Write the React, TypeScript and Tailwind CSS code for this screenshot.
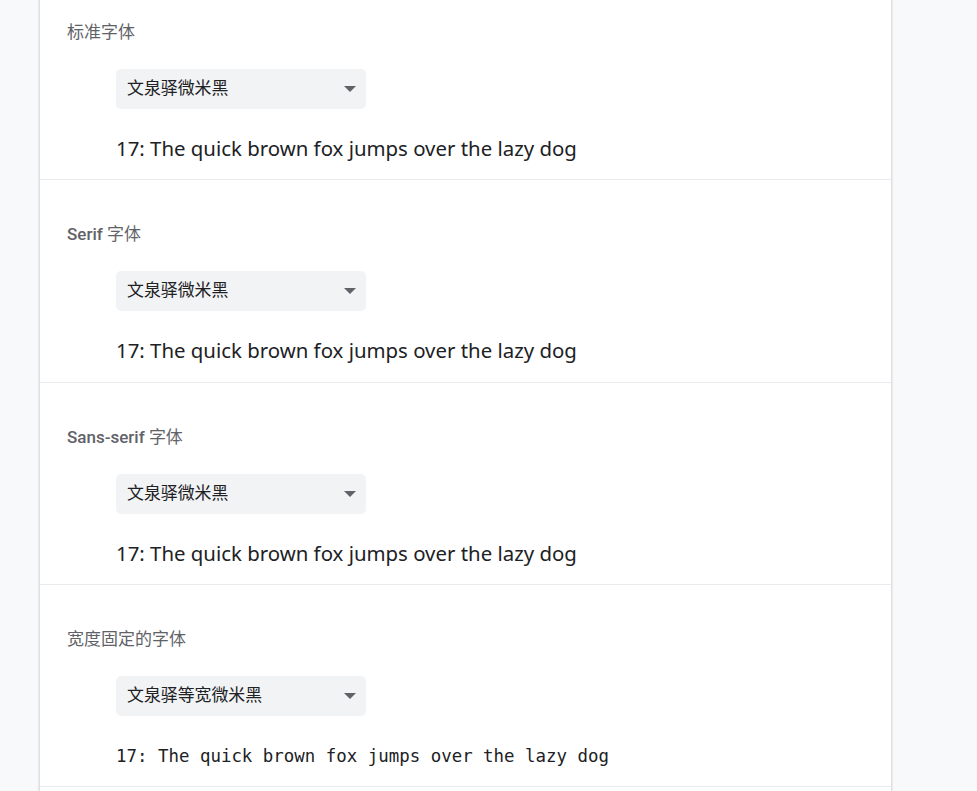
import React from "react";

type FontRow = {
  label: string;
  family: string;
  mono?: boolean;
};

const rows: FontRow[] = [
  { label: "标准字体", family: "文泉驿微米黑" },
  { label: "Serif 字体", family: "文泉驿微米黑" },
  { label: "Sans-serif 字体", family: "文泉驿微米黑" },
  { label: "宽度固定的字体", family: "文泉驿等宽微米黑", mono: true },
];

const uiFont = { fontFamily: 'Roboto, "Noto Sans CJK SC", sans-serif' };
const sampleFont = { fontFamily: '"Noto Sans", "Noto Sans CJK SC", sans-serif' };
const monoFont = { fontFamily: '"DejaVu Sans Mono", "Noto Sans CJK SC", monospace' };

// Latin words in the labels are set medium, Han characters stay regular
function Label({ text }: { text: string }) {
  const parts = text.split(/([\u4e00-\u9fff]+)/).filter(Boolean);
  return (
    <div className="h-[20px] text-[17px] leading-[20px] text-[#5f6368]" style={uiFont}>
      {parts.map((part, i) => (
        <span key={i} className={/[\u4e00-\u9fff]/.test(part) ? "font-normal" : "font-medium"}>{part}</span>
      ))}
    </div>
  );
}

function FontSelect({ value }: { value: string }) {
  return (
    <div className="flex h-[40px] w-[250px] items-center justify-between rounded-[5px] bg-[#f1f3f4] pl-[11px] pr-[10px]">
      <span className="text-[16.9px] text-[#202124]" style={uiFont}>{value}</span>
      <svg width="12" height="6" viewBox="0 0 12 6" className="shrink-0">
        <path d="M0 0h12L6 6z" fill="#5f6368" />
      </svg>
    </div>
  );
}

function FontSection({ row }: { row: FontRow }) {
  return (
    <section className="border-b border-[#e8eaed] pl-[27px] pt-[44px] pb-[15.5px]">
      <Label text={row.label} />
      <div className="mt-[27px] pl-[49px]">
        <FontSelect value={row.family} />
        <p
          className={row.mono ? "mt-[26px] h-[28px] text-[17.43px] leading-[28px] text-[#202124]" : "mt-[25px] mb-[2px] h-[28px] text-[20.4px] leading-[28px] text-[#202124]"}
          style={row.mono ? monoFont : sampleFont}
        >
          17: The quick brown fox jumps over the lazy dog
        </p>
      </div>
    </section>
  );
}

export default function App() {
  return (
    <div className="h-[791px] overflow-hidden bg-[#f8f9fa]">
      <div className="-mt-[22.5px] ml-[40px] w-[851px] bg-white shadow-[0_0_2px_1px_rgba(60,64,67,0.2)]">
        {rows.map((row) => (
          <FontSection key={row.label} row={row} />
        ))}
        <div className="h-[40px]" />
      </div>
    </div>
  );
}
